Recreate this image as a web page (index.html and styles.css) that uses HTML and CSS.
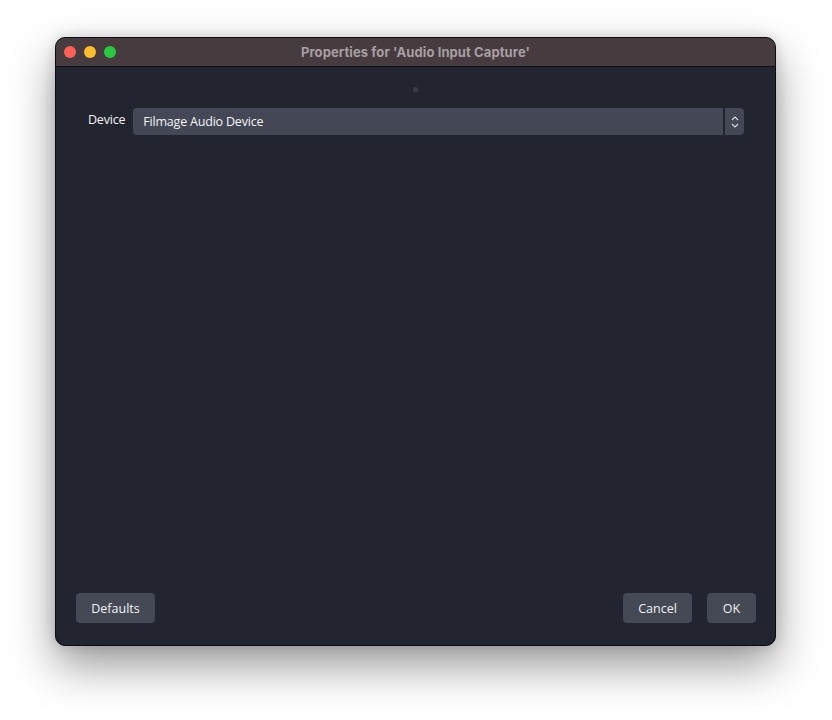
FILE: index.html
```html
<!DOCTYPE html>
<html lang="en">
<head>
    <meta charset="UTF-8">
    <title>Properties for 'Audio Input Capture'</title>
    <link rel="stylesheet" href="styles.css">
</head>
<body>
    <div class="window">
        <div class="titlebar">
            <div class="lights">
                <span class="light red"></span>
                <span class="light yellow"></span>
                <span class="light green"></span>
            </div>
            <div class="title">Properties for 'Audio Input Capture'</div>
        </div>

        <div class="content">
            <div class="handle"></div>

            <div class="form-row">
                <label class="form-label">Device</label>
                <div class="select">
                    <span class="select-value">Filmage Audio Device</span>
                    <span class="select-arrows">
                        <svg width="8" height="14" viewBox="0 0 8 14">
                            <path d="M1 5 L4 2 L7 5" fill="none" stroke="#d6d7dc" stroke-width="1.2"/>
                            <path d="M1 9 L4 12 L7 9" fill="none" stroke="#d6d7dc" stroke-width="1.2"/>
                        </svg>
                    </span>
                </div>
            </div>

            <div class="spacer"></div>

            <div class="button-row">
                <button class="btn btn-defaults">Defaults</button>
                <div class="right-buttons">
                    <button class="btn btn-cancel">Cancel</button>
                    <button class="btn btn-ok">OK</button>
                </div>
            </div>
        </div>
    </div>
</body>
</html>
```

FILE: styles.css
```css
* { margin: 0; padding: 0; box-sizing: border-box; }
html, body { background: #fff; }
body { min-height: 720px; padding: 37px 0 0 55px; font-family: 'Open Sans', 'Noto Sans', sans-serif; }

.window { width: 721px; height: 609px; border: 1px solid #0c0c0e; border-radius: 10px; overflow: hidden; background: #22242f; display: flex; flex-direction: column; box-shadow: 0 20px 45px rgba(0,0,0,0.4), 0 0 14px rgba(0,0,0,0.15); }

.titlebar { height: 29px; background: #463b3f; border-bottom: 1px solid #0e0e10; display: flex; align-items: center; position: relative; }
.lights { display: flex; gap: 8px; padding-left: 8px; }
.light { width: 12px; height: 12px; border-radius: 50%; }
.light.red { background: #fe5f57; }
.light.yellow { background: #febc2e; }
.light.green { background: #28c840; }
.title { position: absolute; left: 0; right: 0; text-align: center; font-family: Inter, 'Liberation Sans', sans-serif; font-weight: 700; font-size: 13px; letter-spacing: 0.1px; color: #a79fa2; }

.content { flex: 1; display: flex; flex-direction: column; padding: 20px 31px 22px 20px; }
.handle { width: 5px; height: 5px; border-radius: 50%; background: #3a3d4a; align-self: center; margin-left: 11px; }

.form-row { display: flex; align-items: center; margin-top: 16px; padding-left: 12px; }
.form-label { color: #f2f2f4; font-size: 12.5px; font-weight: 500; margin-right: 8px; margin-top: -4px; letter-spacing: -0.2px; }
.select { flex: 1; height: 27px; background: #444755; border-radius: 4px; display: flex; align-items: center; }
.select-value { flex: 1; color: #f4f4f6; font-size: 12.5px; font-weight: 500; padding-left: 10px; letter-spacing: -0.2px; }
.select-arrows { width: 21px; height: 27px; border-left: 2px solid #22242f; display: flex; align-items: center; justify-content: center; }

.spacer { flex: 1; }

.button-row { display: flex; justify-content: space-between; margin-right: -12px; }
.right-buttons { display: flex; gap: 15px; }
.btn { height: 30px; background: #454855; color: #f2f2f4; border: none; border-radius: 4px; font-family: 'Open Sans', 'Noto Sans', sans-serif; font-size: 12.5px; font-weight: 500; }
.btn-defaults { width: 79px; }
.btn-cancel { width: 69px; }
.btn-ok { width: 49px; }
```
